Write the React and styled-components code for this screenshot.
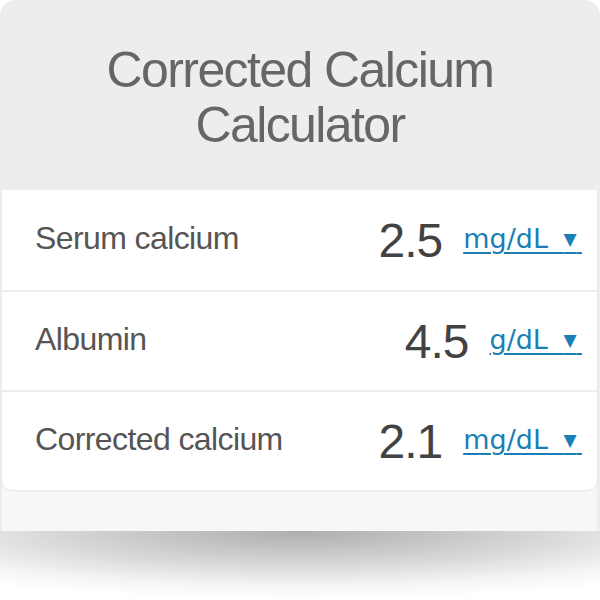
import React from 'react'
import styled, { createGlobalStyle } from 'styled-components'

const GlobalStyle = createGlobalStyle`
  html, body {
    margin: 0;
    padding: 0;
    background: #ffffff;
  }
  body {
    width: 600px;
    height: 600px;
    overflow: hidden;
    font-family: "Liberation Sans", Arial, sans-serif;
  }
`

const Page = styled.div`
  width: 600px;
  height: 600px;
  display: flex;
  flex-direction: column;
`

const Card = styled.div`
  width: 600px;
  height: 531px;
  background-color: #ededed;
  border-radius: 16px 16px 0 0;
  display: flex;
  flex-direction: column;
  overflow: hidden;
`

const Header = styled.div`
  height: 190px;
  box-sizing: border-box;
  padding-top: 43px;
  text-align: center;
`

const Title = styled.h1`
  margin: 0;
  font-size: 50px;
  font-weight: 400;
  line-height: 55px;
  letter-spacing: -1.6px;
  color: #666666;
`

const Body = styled.div`
  flex: 1;
  margin: 0 3px 0 2px;
  background-color: #f7f7f7;
`

const Panel = styled.div`
  background-color: #ffffff;
  border-radius: 0 0 10px 10px;
  box-shadow: 0 1px 2px rgba(0, 0, 0, 0.07);
`

const Row = styled.div`
  height: 100px;
  box-sizing: border-box;
  padding: 0 15px 0 33px;
  display: flex;
  align-items: center;
  border-top: ${(p) => (p.first ? 'none' : '2px solid #ededed')};
`

const Label = styled.div`
  flex: 1;
  font-size: 32px;
  letter-spacing: -0.6px;
  color: #555555;
  margin-top: -3px;
`

const Value = styled.div`
  font-size: 48px;
  letter-spacing: -1px;
  color: #424242;
`

const Unit = styled.div`
  margin-left: 21px;
  font-family: "DejaVu Sans", Verdana, sans-serif;
  font-size: 27px;
  color: #1a7fb5;
  text-decoration: underline;
  text-decoration-thickness: 2px;
  text-underline-offset: 4px;
  margin-top: -3px;
`

const Gap = styled.span`
  letter-spacing: 7px;
`

const Arrow = styled.span`
  font-size: 17px;
  vertical-align: 3px;
`

/* soft drop shadow under the card */
const Shadow = styled.div`
  height: 69px;
  background: radial-gradient(
    ellipse 85% 100% at 50% 0%,
    rgba(0, 0, 0, 0.32) 0%,
    rgba(0, 0, 0, 0.17) 45%,
    rgba(0, 0, 0, 0.04) 80%,
    rgba(0, 0, 0, 0) 100%
  );
`

const rows = [
  { label: 'Serum calcium', value: '2.5', unit: 'mg/dL' },
  { label: 'Albumin', value: '4.5', unit: 'g/dL' },
  { label: 'Corrected calcium', value: '2.1', unit: 'mg/dL' },
]

export default function App() {
  return (
    <Page>
      <GlobalStyle />
      <Card>
        <Header>
          <Title>
            Corrected Calcium
            <br />
            Calculator
          </Title>
        </Header>
        <Body>
          <Panel>
            {rows.map((r, i) => (
              <Row key={r.label} first={i === 0}>
                <Label>{r.label}</Label>
                <Value>{r.value}</Value>
                <Unit>
                  {r.unit}
                  <Gap>{'\u00a0'}</Gap>
                  <Arrow>▼{'\u00a0'}</Arrow>
                </Unit>
              </Row>
            ))}
          </Panel>
        </Body>
      </Card>
      <Shadow />
    </Page>
  )
}
